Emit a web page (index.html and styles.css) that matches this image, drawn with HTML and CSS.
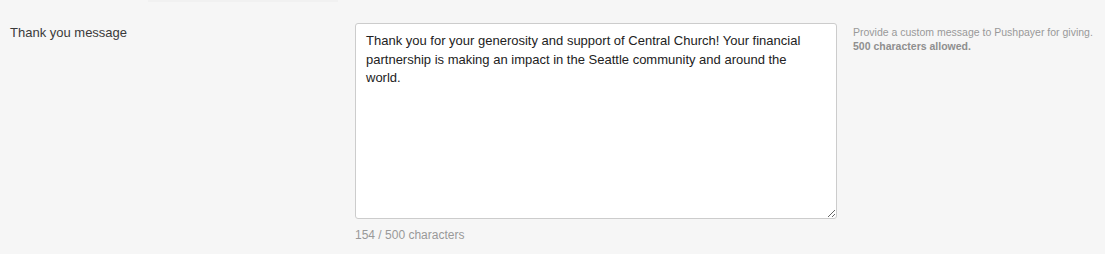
FILE: index.html
```html
<!DOCTYPE html>
<html>

<head>
    <meta charset="utf-8">
    <title>Giving settings</title>
    <link rel="stylesheet" href="styles.css">
</head>

<body>

    <div class="shade"></div>

    <div class="row">
        <label class="label" for="message">Thank you message</label>

        <div class="field">
            <textarea id="message" class="message" maxlength="500">Thank you for your generosity and support of Central Church! Your financial partnership is making an impact in the Seattle community and around the world.</textarea>
            <p class="count"><span id="count">154</span> / 500 characters</p>
        </div>

        <div class="help">
            <p>Provide a custom message to Pushpayer for giving.</p>
            <p class="strong">500 characters allowed.</p>
        </div>
    </div>

</body>

</html>
```

FILE: styles.css
```css
body {
    margin: 0;
    background-color: #f6f6f6;
    font-family: "Liberation Sans", Arial, sans-serif;
    color: #333;
}

p {
    padding: 0;
    margin: 0;
}

.shade {
    width: 190px;
    height: 2px;
    margin-left: 148px;
    background-color: #f1f1f1;
}

.row {
    display: flex;
    align-items: flex-start;
    padding: 21px 0 0 10px;
}

.label {
    width: 345px;
    font-size: 13px;
    line-height: 20px;
    color: #3a3a3a;
}

.field {
    width: 482px;
}

.message {
    display: block;
    box-sizing: border-box;
    width: 482px;
    height: 196px;
    margin: 0;
    padding: 8px 24px 8px 10px;
    border: 1px solid #ccc;
    border-radius: 3px;
    background-color: #fff;
    font-family: "Liberation Sans", Arial, sans-serif;
    font-size: 13px;
    line-height: 18.5px;
    color: #222;
    resize: vertical;
}

.count {
    margin-top: 9px;
    font-size: 12px;
    color: #999;
}

.help {
    margin-left: 16px;
    padding-top: 2px;
    font-size: 10.5px;
    line-height: 14px;
    color: #999;
}

.strong {
    font-weight: bold;
    color: #8f8f8f;
}
```
